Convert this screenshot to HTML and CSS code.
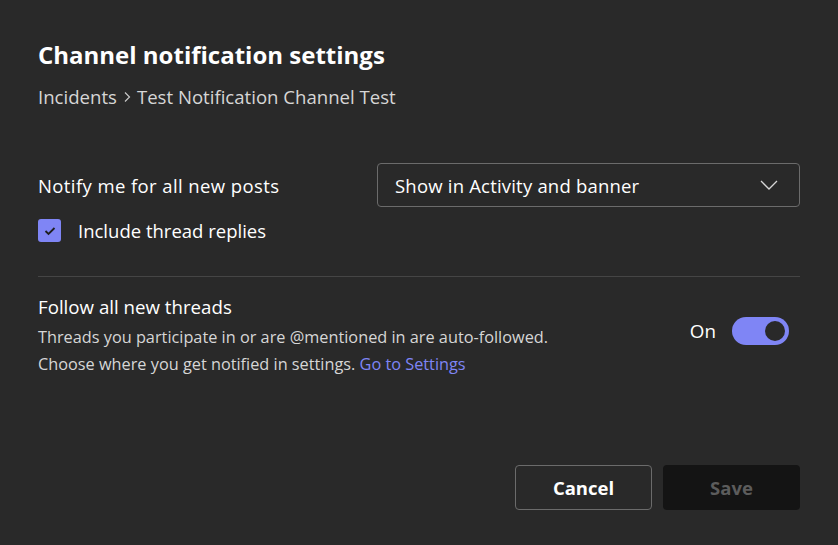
FILE: index.html
```html
<!DOCTYPE html>
<html lang="en">
<head>
  <meta charset="UTF-8">
  <meta name="viewport" content="width=device-width, initial-scale=1.0">
  <title>Channel notification settings</title>
  <link rel="stylesheet" href="styles.css">
</head>
<body>
  <div class="dialog">
    <h1 class="title">Channel notification settings</h1>
    <div class="breadcrumb">
      <span>Incidents</span>
      <svg class="crumb-sep" width="10" height="12" viewBox="0 0 10 12"><path d="M3 1.5 L7.5 6 L3 10.5" fill="none" stroke="#c8c8c8" stroke-width="1.2"/></svg>
      <span>Test Notification Channel Test</span>
    </div>

    <div class="notify-row">
      <span class="label">Notify me for all new posts</span>
      <div class="select">
        <span>Show in Activity and banner</span>
        <svg width="20" height="12" viewBox="0 0 20 12"><path d="M2 2 L10 10 L18 2" fill="none" stroke="#d6d6d6" stroke-width="1.3"/></svg>
      </div>
    </div>

    <label class="check-row">
      <span class="checkbox">
        <svg width="12" height="10" viewBox="0 0 12 10"><path d="M1.5 5 L4.5 8 L10.5 2" fill="none" stroke="#1f1f1f" stroke-width="1.8"/></svg>
      </span>
      <span class="label">Include thread replies</span>
    </label>

    <hr class="divider">

    <div class="follow-row">
      <div class="follow-text">
        <div class="follow-title">Follow all new threads</div>
        <div class="desc">Threads you participate in or are @mentioned in are auto-followed.</div>
        <div class="desc">Choose where you get notified in settings. <a href="#" class="link">Go to Settings</a></div>
      </div>
      <div class="toggle-wrap">
        <span class="toggle-label">On</span>
        <span class="toggle"><span class="knob"></span></span>
      </div>
    </div>

    <div class="footer">
      <button class="btn btn-cancel">Cancel</button>
      <button class="btn btn-save" disabled>Save</button>
    </div>
  </div>
</body>
</html>
```

FILE: styles.css
```css
body {
  margin: 0;
  background-color: #292929;
  color: #ffffff;
  font-family: "Open Sans", "Noto Sans", sans-serif;
}

.dialog {
  box-sizing: border-box;
  height: 545px;
  padding: 38px 38px 35px 38px;
  display: flex;
  flex-direction: column;
}

.title {
  margin: 0;
  font-size: 24px;
  font-weight: 700;
  line-height: 34px;
}

.breadcrumb {
  margin-top: 12px;
  display: flex;
  align-items: center;
  gap: 5px;
  font-size: 18.6px;
  line-height: 26px;
  color: #d6d6d6;
}

.notify-row {
  margin-top: 53px;
  display: flex;
  align-items: center;
  justify-content: space-between;
}

.label {
  font-size: 18.5px;
}

.notify-row .label {
  letter-spacing: 0.4px;
}

.select {
  box-sizing: border-box;
  width: 423px;
  height: 44px;
  border: 1px solid #6b6b6b;
  border-radius: 4px;
  display: flex;
  align-items: center;
  justify-content: space-between;
  padding: 0 20px 0 17px;
  font-size: 18.5px;
  letter-spacing: 0.2px;
}

.check-row {
  margin-top: 11px;
  display: flex;
  align-items: center;
  gap: 17px;
}

.checkbox {
  width: 23px;
  height: 23px;
  border-radius: 3px;
  background-color: #7f85f5;
  display: flex;
  align-items: center;
  justify-content: center;
}

.divider {
  width: 100%;
  margin: 33px 0 0 0;
  border: none;
  border-top: 1px solid #454545;
}

.follow-row {
  margin-top: 15px;
  display: flex;
  align-items: flex-start;
  justify-content: space-between;
}

.follow-title {
  font-size: 18.7px;
  line-height: 30px;
}

.desc {
  font-size: 16.3px;
  line-height: 27px;
  color: #d6d6d6;
}

.follow-title + .desc {
  margin-top: 2px;
}

.link {
  color: #7f85f5;
  text-decoration: none;
}

.toggle-wrap {
  display: flex;
  align-items: center;
  height: 28px;
  gap: 16px;
  margin-top: 25px;
  margin-right: 11px;
}

.toggle-label {
  font-size: 18.8px;
  margin-left: -3px;
}

.toggle {
  box-sizing: border-box;
  width: 57px;
  height: 28px;
  border-radius: 14px;
  background-color: #7f85f5;
  display: flex;
  align-items: center;
  justify-content: flex-end;
  padding-right: 4px;
}

.knob {
  width: 20px;
  height: 20px;
  border-radius: 50%;
  background-color: #292929;
}

.footer {
  margin-top: auto;
  display: flex;
  justify-content: flex-end;
  gap: 11px;
}

.btn {
  box-sizing: border-box;
  width: 137px;
  height: 45px;
  border-radius: 4px;
  font-family: inherit;
  font-size: 18.5px;
  font-weight: 700;
}

.btn-cancel {
  background-color: #292929;
  border: 1px solid #6b6b6b;
  color: #ffffff;
}

.btn-save {
  background-color: #141414;
  border: none;
  color: #5c5c5c;
}
```
